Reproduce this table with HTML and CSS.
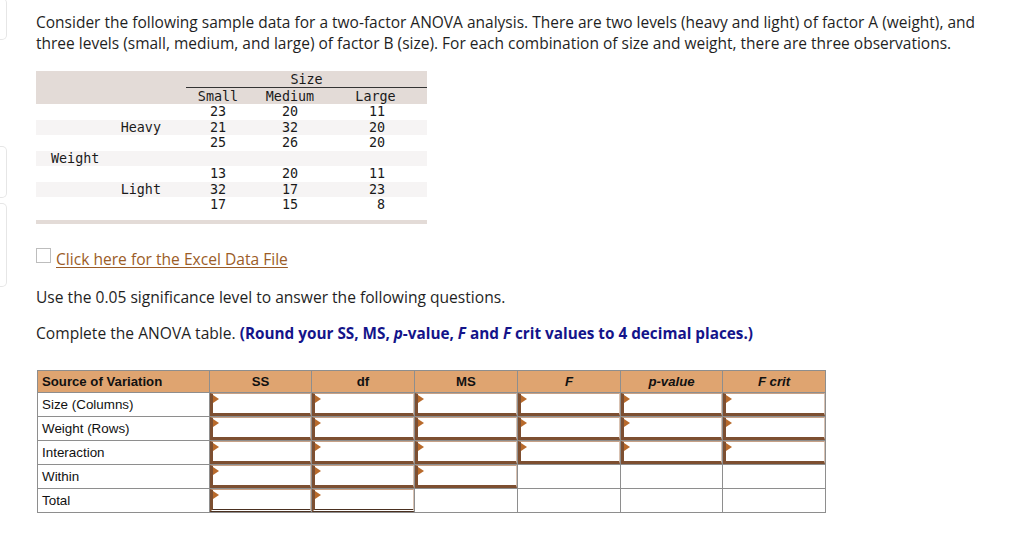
FILE: index.html
```html
<!DOCTYPE html>
<html>
<head>
<meta charset="utf-8">
<link rel="stylesheet" href="styles.css">
</head>
<body>
<div class="page">
  <aside class="rail">
    <div class="tab tab1"></div>
    <div class="tab tab2"></div>
    <div class="tab tab3"></div>
  </aside>
  <main class="main">
    <p class="intro">Consider the following sample data for a two-factor ANOVA analysis. There are two levels (heavy and light) of factor A (weight), and three levels (small, medium, and large) of factor B (size). For each combination of size and weight, there are three observations.</p>

    <table class="data">
      <colgroup>
        <col class="c1"><col class="c2"><col class="c3"><col class="c4"><col class="c5">
      </colgroup>
      <tr class="hd hd1"><td></td><td></td><td colspan="3" class="size">Size</td></tr>
      <tr class="hd hd2"><td></td><td></td><td class="ctr">Small</td><td class="ctr">Medium</td><td class="ctr lg">Large</td></tr>
      <tr><td></td><td></td><td class="ctr">23</td><td class="ctr">20</td><td class="rt">11</td></tr>
      <tr class="alt"><td></td><td class="lvl">Heavy</td><td class="ctr">21</td><td class="ctr">32</td><td class="rt">20</td></tr>
      <tr><td></td><td></td><td class="ctr">25</td><td class="ctr">26</td><td class="rt">20</td></tr>
      <tr class="alt"><td class="fac">Weight</td><td></td><td></td><td></td><td></td></tr>
      <tr><td></td><td></td><td class="ctr">13</td><td class="ctr">20</td><td class="rt">11</td></tr>
      <tr class="alt"><td></td><td class="lvl">Light</td><td class="ctr">32</td><td class="ctr">17</td><td class="rt">23</td></tr>
      <tr><td></td><td></td><td class="ctr">17</td><td class="ctr">15</td><td class="rt">8</td></tr>
      <tr class="gap"><td colspan="5"></td></tr>
      <tr class="foot"><td colspan="5"></td></tr>
    </table>

    <div class="linkrow">
      <span class="chk"></span>
      <a class="xl" href="#">Click here for the Excel Data File</a>
    </div>

    <p class="q">Use the 0.05 significance level to answer the following questions.</p>
    <p class="q q2">Complete the ANOVA table. <strong class="note">(Round your SS, MS, <em>p</em>-value, <em>F</em> and <em>F</em> crit values to 4 decimal places.)</strong></p>

    <table class="anova">
      <colgroup>
        <col class="a1"><col class="a2"><col class="a3"><col class="a4"><col class="a5"><col class="a6"><col class="a7">
      </colgroup>
      <tr class="ahd">
        <th class="left">Source of Variation</th>
        <th>SS</th><th>df</th><th>MS</th><th><em>F</em></th><th><em>p-value</em></th><th><em>F crit</em></th>
      </tr>
      <tr>
        <td class="lab">Size (Columns)</td>
        <td class="in"><div class="box"></div></td><td class="in"><div class="box"></div></td><td class="in"><div class="box"></div></td><td class="in"><div class="box"></div></td><td class="in"><div class="box"></div></td><td class="in"><div class="box"></div></td>
      </tr>
      <tr>
        <td class="lab">Weight (Rows)</td>
        <td class="in"><div class="box"></div></td><td class="in"><div class="box"></div></td><td class="in"><div class="box"></div></td><td class="in"><div class="box"></div></td><td class="in"><div class="box"></div></td><td class="in"><div class="box"></div></td>
      </tr>
      <tr>
        <td class="lab">Interaction</td>
        <td class="in"><div class="box"></div></td><td class="in"><div class="box"></div></td><td class="in"><div class="box"></div></td><td class="in"><div class="box"></div></td><td class="in"><div class="box"></div></td><td class="in"><div class="box"></div></td>
      </tr>
      <tr>
        <td class="lab">Within</td>
        <td class="in"><div class="box"></div></td><td class="in"><div class="box"></div></td><td class="in"><div class="box"></div></td><td></td><td></td><td></td>
      </tr>
      <tr class="total">
        <td class="lab">Total</td>
        <td class="in"><div class="box"></div></td><td class="in"><div class="box"></div></td><td></td><td></td><td></td><td></td>
      </tr>
    </table>
  </main>
</div>
</body>
</html>
```

FILE: styles.css
```css
html, body {
  margin: 0;
  padding: 0;
  background: #ffffff;
}

body {
  font-family: "Open Sans", "Liberation Sans", sans-serif;
  color: #1f1f1f;
  width: 1024px;
  height: 548px;
  overflow: hidden;
}

.page {
  display: flex;
}

.rail {
  width: 36px;
  flex: none;
  display: flex;
  flex-direction: column;
}

.tab {
  width: 7px;
  border: 1px solid #e6e6e6;
  border-left: none;
  border-radius: 0 5px 5px 0;
  box-sizing: border-box;
}

.tab1 { height: 42px; margin-top: -2px; }
.tab2 { height: 52px; margin-top: 106px; }
.tab3 { height: 84px; margin-top: 5px; }

.main {
  flex: 1;
}

.intro {
  margin: 12px 0 0 0;
  font-size: 15.5px;
  line-height: 21px;
  width: 975px;
}

/* ---------- data table ---------- */
.data {
  margin-top: 17px;
  border-collapse: collapse;
  table-layout: fixed;
  width: 391px;
  font-family: "DejaVu Sans Mono", "Liberation Mono", monospace;
  font-size: 13.4px;
  color: #1a1a1a;
}

.data col.c1 { width: 74px; }
.data col.c2 { width: 76px; }
.data col.c3 { width: 64px; }
.data col.c4 { width: 80px; }
.data col.c5 { width: 97px; }

.data td {
  padding: 0;
  height: 15.5px;
  line-height: 15px;
  white-space: nowrap;
}

.data tr.hd td {
  background: #e3dbd7;
  height: 16px;
}

.data td.size {
  text-align: center;
  border-bottom: 1.5px solid #333;
}

.data td.ctr { text-align: center; }
.data td.lg { text-align: center; padding-right: 6px; }
.data td.rt { text-align: right; padding-right: 42px; }
.data td.lvl { text-align: right; padding-right: 25px; }
.data td.fac { padding-left: 15px; }

.data tr.alt td { background: #f6f4f4; }

.data tr.gap td { height: 7px; }
.data tr.foot td { height: 4px; background: #e3dbd7; }

/* ---------- link ---------- */
.linkrow {
  margin-top: 24px;
  display: flex;
  align-items: center;
  height: 18px;
}

.chk {
  width: 15px;
  height: 15px;
  border: 1px solid #bdbdbd;
  box-sizing: border-box;
  margin-top: -2px;
}

.xl {
  margin-left: 5px;
  font-size: 15.6px;
  color: #9b5c27;
  text-decoration: underline;
  text-underline-offset: 2px;
  padding-top: 5px;
}

.q {
  margin: 21px 0 0 0;
  font-size: 15.6px;
  line-height: 20px;
}

.q2 { margin-top: 16px; }

.note {
  color: #14148a;
  font-weight: 700;
  font-size: 15.3px;
}

.note em { font-style: italic; }

/* ---------- ANOVA table ---------- */
.anova {
  margin-top: 27px;
  margin-left: 1px;
  border-collapse: collapse;
  table-layout: fixed;
  width: 788px;
  font-family: "Liberation Sans", Arial, sans-serif;
  color: #111;
}

.anova col.a1 { width: 172px; }
.anova col.a2 { width: 102px; }
.anova col.a3 { width: 103px; }
.anova col.a4 { width: 103px; }
.anova col.a5 { width: 103px; }
.anova col.a6 { width: 102px; }
.anova col.a7 { width: 103px; }

.anova th {
  background: #dfa470;
  border: 1px solid #8e8e8e;
  height: 21px;
  padding: 0;
  font-weight: 700;
  text-align: center;
  font-size: 13.2px;
}

.anova th.left {
  text-align: left;
  padding-left: 4px;
}

.anova td {
  border: 1px solid #8e8e8e;
  height: 22px;
  padding: 0;
}

.anova td.lab {
  padding-left: 4px;
  font-size: 13.4px;
}

.anova td.in {
  position: relative;
}

.box {
  position: relative;
  height: 23px;
  box-sizing: border-box;
  border-style: solid;
  border-width: 1px 1px 3px 3px;
  border-color: #c7a186 #d9c2b2 #7d4f31 #7d4f31;
  background: #fff;
}

.box::before {
  content: "";
  position: absolute;
  left: 0;
  top: 1px;
  border-style: solid;
  border-width: 4px 0 4px 6px;
  border-color: transparent transparent transparent #b86a2c;
}

.total td.in .box {
  border-bottom: 3px double #4a3020;
}
```
